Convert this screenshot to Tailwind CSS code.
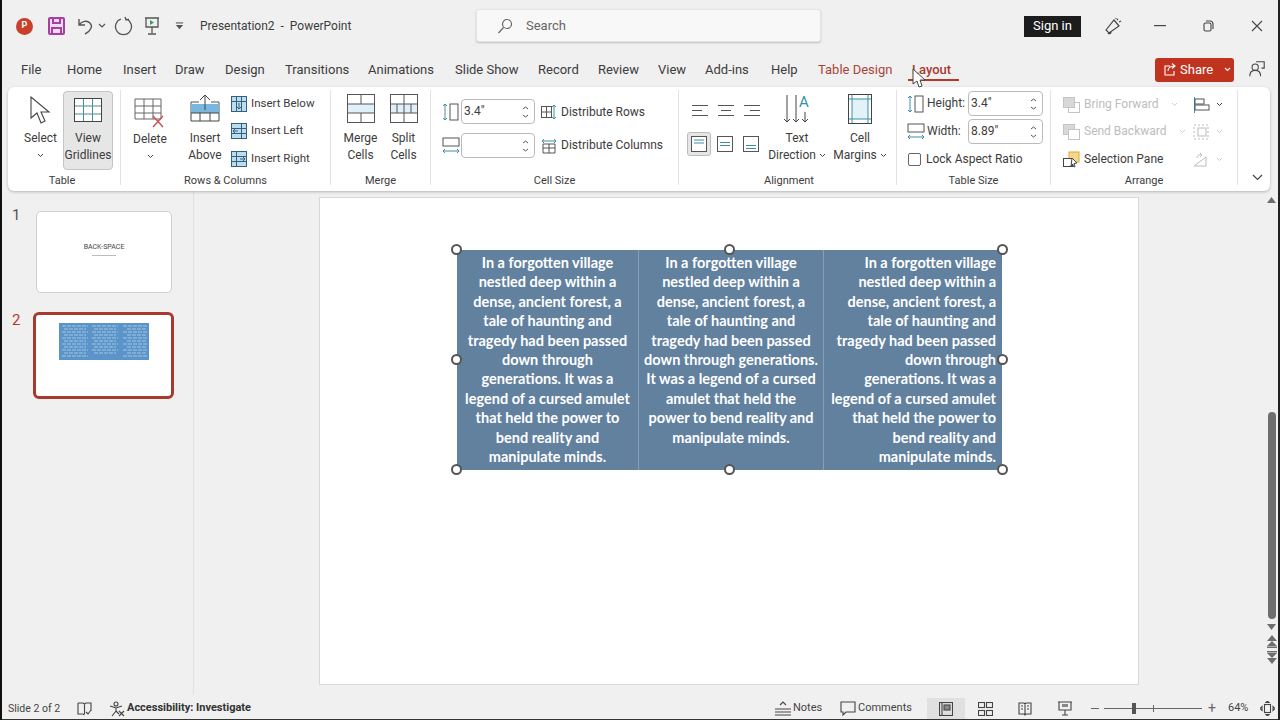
<!DOCTYPE html>
<html lang="en">
<head>
<meta charset="UTF-8">
<title>Presentation2 - PowerPoint</title>
<script src="https://cdn.jsdelivr.net/npm/@tailwindcss/browser@4"></script>
</head>
<body class="w-[1280px] h-[720px] overflow-hidden bg-[#f0f0f0] font-['Roboto',sans-serif] text-[#3c3c3c] flex flex-col border-l-2 border-r-2 border-l-[#111] border-r-[#222]">

<!-- title bar -->
<header class="h-[51px] flex items-center shrink-0 relative pt-[1px]">
  <div class="ml-[14px] w-[17px] h-[17px] rounded-full bg-[#c8402a] text-white text-[9px] font-bold flex items-center justify-center">P</div>
  <svg class="ml-[14px]" width="20" height="20" viewBox="0 0 20 20" fill="none" stroke="#a63ea6" stroke-width="2"><rect x="2" y="2" width="15" height="16" rx="1" fill="#eddcf0"/><path d="M6 2v5h7V2M5 18v-6h9v6"/></svg>
  <svg class="ml-[8px]" width="20" height="20" viewBox="0 0 20 20" fill="none" stroke="#555" stroke-width="1.400"><path d="M4 3v6h6M4 9c3-4 8-5 11-2s1 8-5 11"/></svg>
  <svg class="ml-[3px]" width="8" height="6" viewBox="0 0 8 6" fill="none" stroke="#555" stroke-width="1.200"><path d="M1 1l3 3 3-3"/></svg>
  <svg class="ml-[7px]" width="20" height="20" viewBox="0 0 20 20" fill="none" stroke="#555" stroke-width="1.300"><path d="M8 3a8 8 0 1 0 5 0M12 1l1 3 3-1"/></svg>
  <svg class="ml-[10px]" width="18" height="20" viewBox="0 0 18 20" fill="none" stroke="#555" stroke-width="1.300"><path d="M2 2h14M3 2v9h12V2M9 11v6M5 18h8"/><path d="M7 4l4 2.500-4 2.500z" fill="#3c9a5f" stroke="none"/></svg>
  <svg class="ml-[14px]" width="9" height="10" viewBox="0 0 10 10" fill="#555"><rect x="1" y="1" width="8" height="1.200"/><path d="M1 4h8L5 8.500z"/></svg>
  <span class="ml-[16px] text-[12px] whitespace-pre">Presentation2  -  PowerPoint</span>
  <div class="absolute left-[474px] top-[9px] w-[345px] h-[33px] bg-[#f8f8f8] border border-[#e4e4e4] rounded-[3px] shadow-[0_1px_2px_rgba(0,0,0,0.2)] flex items-center pl-[20px] text-[13px] text-[#666]">
    <svg width="16" height="16" viewBox="0 0 16 16" fill="none" stroke="#666" stroke-width="1.200"><circle cx="10" cy="6" r="4.500"/><path d="M6.500 9.500L1.500 15"/></svg>
    <span class="ml-[13px]">Search</span>
  </div>
  <div class="ml-auto flex items-center pr-[15px]">
    <div class="bg-[#1c1c1c] text-white text-[13px] w-[57px] h-[21px] flex items-center justify-center">Sign in</div>
    <svg class="ml-[23px]" width="18" height="18" viewBox="0 0 18 18" fill="none" stroke="#444" stroke-width="1.200"><path d="M2 13l8-10 5 6-10 7zM4 16c1 1 3 1 3-1M13 3l1-1M15 5l2-1M12 1v1"/></svg>
    <svg class="ml-[32px]" width="12" height="2" viewBox="0 0 12 2"><rect width="12" height="1.200" fill="#444"/></svg>
    <svg class="ml-[37px]" width="11" height="12" viewBox="0 0 11 12" fill="none" stroke="#444" stroke-width="1.100"><rect x="1" y="3" width="7" height="8" rx="1.500"/><path d="M3 1h4a3 3 0 0 1 3 3v5"/></svg>
    <svg class="ml-[37px]" width="12" height="12" viewBox="0 0 12 12" stroke="#444" stroke-width="1.100"><path d="M1 1l10 10M11 1L1 11"/></svg>
  </div>
</header>

<!-- tabs -->
<nav class="h-[36px] flex items-center shrink-0 text-[13px] relative pt-[1px]">
  <span class="ml-[19px] w-[46px]">File</span><span class="w-[56px]">Home</span><span class="w-[52px]">Insert</span><span class="w-[50px]">Draw</span><span class="w-[60px]">Design</span><span class="w-[83px]">Transitions</span><span class="w-[87px]">Animations</span><span class="w-[83px]">Slide Show</span><span class="w-[60px]">Record</span><span class="w-[60px]">Review</span><span class="w-[47px]">View</span><span class="w-[66px]">Add-ins</span><span class="w-[47px]">Help</span><span class="w-[94px] text-[#a8443a]">Table Design</span>
  <span class="relative text-[#a8392c] font-medium">Layout<span class="absolute left-[-4px] right-[-8px] top-[19px] h-[2px] bg-[#b5382a]"></span></span>
  <div class="ml-auto mr-[44px] flex items-center w-[79px] h-[24px] bg-[#c0331f] text-white rounded-[3px] text-[13px]">
    <svg class="ml-[8px]" width="13" height="13" viewBox="0 0 13 13" fill="none" stroke="#fff" stroke-width="1.100"><path d="M7 3H2v9h9V8M5 8c0-3 2-5 7-5M9 0.500L12 3 9 5.500"/></svg>
    <span class="ml-[4px]">Share</span>
    <svg class="ml-[11px]" width="7" height="5" viewBox="0 0 7 5" fill="none" stroke="#fff" stroke-width="1.100"><path d="M1 1l2.500 2.500L6 1"/></svg>
  </div>
  <svg class="absolute left-[1246px] top-[8px]" width="18" height="20" viewBox="0 0 20 20" fill="none" stroke="#444" stroke-width="1.200"><circle cx="8" cy="8" r="3.500"/><path d="M2 18c0-5 3-6.500 6-6.500s6 1.500 6 6.500M9 2h9v7h-3"/></svg>
</nav>

<!-- ribbon -->
<section class="relative shrink-0 ml-[6px] w-[1262px] h-[104px] bg-white rounded-[6px] shadow-[0_1px_3px_rgba(0,0,0,0.25)] flex text-[12px] leading-[17px] z-10">

  <!-- Table -->
  <div class="w-[113px] shrink-0 flex flex-col border-r border-[#e2e2e2] mt-[3px] mb-[6px]">
    <div class="flex-1 min-h-0 flex pl-[12px]">
      <div class="w-[41px] flex flex-col items-center pt-[6px]">
        <svg width="24" height="30" viewBox="0 0 24 30" fill="#fff" stroke="#444" stroke-width="1.100"><path d="M2 1v21l6-5 4 10 4-2-4-9h8z"/></svg>
        <span class="mt-[4px]">Select</span>
        <svg class="mt-[6px]" width="7" height="5" viewBox="0 0 7 5" fill="none" stroke="#444"><path d="M1 1l2.500 2.500L6 1"/></svg>
      </div>
      <div class="ml-[2px] mt-[1px] w-[50px] h-[79px] bg-[#e6e6e6] border border-[#c4c4c4] rounded-[4px] flex flex-col items-center pt-[6px]">
        <svg width="28" height="24" viewBox="0 0 28 24" fill="#fff" stroke="#4a8a9a" stroke-width="1"><rect x="0.500" y="0.500" width="27" height="23" stroke="#444"/><path d="M9.500 1v22M18.500 1v22M1 8h26M1 16h26" fill="none"/></svg>
        <span class="mt-[8px] text-center leading-[17px]">View<br>Gridlines</span>
      </div>
    </div>
    <div class="h-[13px] text-center text-[11px] leading-[18px] pr-[4px]">Table</div>
  </div>

  <!-- Rows & Columns -->
  <div class="w-[210px] shrink-0 flex flex-col border-r border-[#e2e2e2] mt-[3px] mb-[6px]">
    <div class="flex-1 min-h-0 flex">
      <div class="ml-[5px] w-[48px] flex flex-col items-center pt-[8px]">
        <svg width="32" height="31" viewBox="0 0 32 31" fill="none" stroke="#666" stroke-width="1"><path d="M1 1h26v20H1zM10 1v20M19 1v20M1 8h26M1 15h26"/><path d="M19 18l10 11M29 18L19 29" stroke="#c9505a" stroke-width="1.400"/></svg>
        <span class="mt-[2px]">Delete</span>
        <svg class="mt-[6px]" width="7" height="5" viewBox="0 0 7 5" fill="none" stroke="#444"><path d="M1 1l2.500 2.500L6 1"/></svg>
      </div>
      <div class="ml-[6px] w-[50px] flex flex-col items-center pt-[3px]">
        <svg width="30" height="30" viewBox="0 0 30 30" fill="none" stroke="#555" stroke-width="1"><path d="M1 20V9h8M21 9h8v11" /><rect x="1" y="11" width="28" height="9" fill="#7ab7e0" stroke="none"/><path d="M15 17V2M10 7l5-5 5 5" stroke="#444"/><path d="M1 20h28v8H1zM10 20v8M20 20v8" stroke="#444"/></svg>
        <span class="mt-[7px] text-center">Insert<br>Above</span>
      </div>
      <div class="ml-[1px] flex flex-col gap-[10px] pt-[5px] text-[11.500px]">
        <div class="flex items-center gap-[4px] h-[17px]"><svg width="16" height="16" viewBox="0 0 16 16" fill="#bcdcf2" stroke="#35607a"><rect x="0.500" y="0.500" width="15" height="15"/><path d="M5.500 1v14M10.500 1v14M1 5.500h14M8 7v6M6 11l2 2 2-2" fill="none"/></svg><span>Insert Below</span></div>
        <div class="flex items-center gap-[4px] h-[17px]"><svg width="16" height="16" viewBox="0 0 16 16" fill="#bcdcf2" stroke="#35607a"><rect x="0.500" y="0.500" width="15" height="15"/><path d="M10.500 1v14M1 5.500h14M1 10.500h14M7 8H2M4 6L2 8l2 2" fill="none"/></svg><span>Insert Left</span></div>
        <div class="flex items-center gap-[4px] h-[17px] mt-[1px]"><svg width="16" height="16" viewBox="0 0 16 16" fill="#bcdcf2" stroke="#35607a"><rect x="0.500" y="0.500" width="15" height="15"/><path d="M5.500 1v14M1 5.500h14M1 10.500h14M9 8h5M12 6l2 2-2 2" fill="none"/></svg><span>Insert Right</span></div>
      </div>
    </div>
    <div class="h-[13px] text-center text-[11px] leading-[18px]">Rows &amp; Columns</div>
  </div>

  <!-- Merge -->
  <div class="w-[100px] shrink-0 flex flex-col border-r border-[#e2e2e2] mt-[3px] mb-[6px]">
    <div class="flex-1 min-h-0 flex pl-[8px] pt-[4px]">
      <div class="w-[43px] flex flex-col items-center">
        <svg width="28" height="29" viewBox="0 0 28 29" fill="none" stroke="#555"><rect x="1" y="10" width="26" height="9" fill="#dff0fa" stroke="none"/><rect x="0.500" y="0.500" width="27" height="28"/><path d="M1 10h26M1 19h26M14 1v9M14 19v9"/></svg>
        <span class="mt-[7px] text-center">Merge<br>Cells</span>
      </div>
      <div class="w-[43px] flex flex-col items-center">
        <svg width="28" height="29" viewBox="0 0 28 29" fill="none" stroke="#555"><rect x="1" y="10" width="26" height="9" fill="#dff0fa" stroke="none"/><rect x="0.500" y="0.500" width="27" height="28"/><path d="M1 10h26M1 19h26M14 1v27M7 10v9M21 10v9"/></svg>
        <span class="mt-[7px] text-center">Split<br>Cells</span>
      </div>
    </div>
    <div class="h-[13px] text-center text-[11px] leading-[18px]">Merge</div>
  </div>

  <!-- Cell Size -->
  <div class="w-[248px] shrink-0 flex flex-col border-r border-[#e2e2e2] mt-[3px] mb-[6px]">
    <div class="flex-1 min-h-0 flex flex-col pl-[11px] pt-[9px] gap-[9px]">
      <div class="flex items-center h-[25px]">
        <svg width="18" height="18" viewBox="0 0 18 18" fill="none" stroke="#555"><path d="M3 1v16M1 3l2-2 2 2M1 15l2 2 2-2" stroke="#3a8fa8"/><rect x="8" y="1" width="8" height="16"/></svg>
        <div class="ml-[1px] w-[74px] h-[25px] border border-[#bbb] rounded-[4px] flex items-center pl-[2px]">3.4"<svg class="ml-auto mr-[5px]" width="7" height="14" viewBox="0 0 7 14" fill="none" stroke="#555"><path d="M1 4l2.500-2L6 4M1 10l2.500 2L6 10"/></svg></div>
        <svg class="ml-[6px]" width="16" height="16" viewBox="0 0 16 16" fill="none" stroke="#555"><rect x="0.500" y="2.500" width="10" height="11"/><path d="M5.500 3v10M1 8h9"/><path d="M13 1v14M11 3l2-2 2 2M11 13l2 2 2-2" stroke="#3a8fa8"/></svg>
        <span class="ml-[4px] pt-[2px]">Distribute Rows</span>
      </div>
      <div class="flex items-center h-[25px]">
        <svg width="18" height="18" viewBox="0 0 18 18" fill="none" stroke="#555"><rect x="1" y="1" width="16" height="8"/><path d="M1 14h16M3 12l-2 2 2 2M15 12l2 2-2 2" stroke="#3a8fa8"/></svg>
        <div class="ml-[1px] w-[74px] h-[25px] border border-[#bbb] rounded-[4px] flex items-center"><svg class="ml-auto mr-[5px]" width="7" height="14" viewBox="0 0 7 14" fill="none" stroke="#555"><path d="M1 4l2.500-2L6 4M1 10l2.500 2L6 10"/></svg></div>
        <svg class="ml-[6px]" width="16" height="16" viewBox="0 0 16 16" fill="none" stroke="#3a8fa8"><path d="M1 3h14M3 1l-2 2 2 2M13 1l2 2-2 2"/><path d="M2 6h12v9H2zM8 6v9M2 10h12" stroke="#555"/></svg>
        <span class="ml-[4px]">Distribute Columns</span>
      </div>
    </div>
    <div class="h-[13px] text-center text-[11px] leading-[18px]">Cell Size</div>
  </div>

  <!-- Alignment -->
  <div class="w-[218px] shrink-0 flex flex-col border-r border-[#e2e2e2] mt-[3px] mb-[6px]">
    <div class="flex-1 min-h-0 flex">
      <div class="pl-[8px] pt-[8px] w-[86px] shrink-0">
        <div class="flex items-center gap-[10px] h-[24px] pl-[5px]">
          <svg width="16" height="13" viewBox="0 0 16 13" stroke="#555"><path d="M0 1.500h16M0 6.500h10M0 11.500h16"/></svg>
          <svg width="16" height="13" viewBox="0 0 16 13" stroke="#555"><path d="M0 1.500h16M3 6.500h10M0 11.500h16"/></svg>
          <svg width="16" height="13" viewBox="0 0 16 13" stroke="#555"><path d="M0 1.500h16M6 6.500h10M0 11.500h16"/></svg>
        </div>
        <div class="flex items-center mt-[10px] h-[24px]">
          <div class="w-[24px] h-[24px] bg-[#e6e6e6] border border-[#bbb] rounded-[3px] flex items-center justify-center"><svg width="16" height="16" viewBox="0 0 16 16" fill="#fff" stroke="#555"><rect x="0.500" y="0.500" width="15" height="15"/><path d="M3 4h10M3 7h10" stroke="#3a8fa8"/></svg></div>
          <svg class="ml-[6px]" width="16" height="16" viewBox="0 0 16 16" fill="#fff" stroke="#555"><rect x="0.500" y="0.500" width="15" height="15"/><path d="M3 6.500h10M3 9.500h10" stroke="#3a8fa8"/></svg>
          <svg class="ml-[10px]" width="16" height="16" viewBox="0 0 16 16" fill="#fff" stroke="#555"><rect x="0.500" y="0.500" width="15" height="15"/><path d="M3 9.500h10M3 12.500h10" stroke="#3a8fa8"/></svg>
        </div>
      </div>
      <div class="w-[64px] flex flex-col items-center pt-[4px]">
        <svg width="28" height="30" viewBox="0 0 28 30" fill="none" stroke="#444"><path d="M4 1v27M1 25l3 3 3-3M13 1v27M10 25l3 3 3-3M22 18v10M19 25l3 3 3-3"/><text x="16" y="13" font-size="15" fill="#3a8fa8" stroke="none" font-family="Roboto">A</text></svg>
        <span class="mt-[6px] text-center whitespace-nowrap">Text<br>Direction <svg class="inline align-middle" width="7" height="5" viewBox="0 0 7 5" fill="none" stroke="#444"><path d="M1 1l2.500 2.500L6 1"/></svg></span>
      </div>
      <div class="w-[62px] flex flex-col items-center pt-[4px]">
        <svg width="24" height="30" viewBox="0 0 24 30" fill="none" stroke="#3a8fa8"><rect x="4" y="5" width="16" height="20" fill="#e3f1f8" stroke="none"/><rect x="0.500" y="0.500" width="23" height="29" stroke="#444"/><path d="M4 1v28M20 1v28M1 5h22M1 25h22"/></svg>
        <span class="mt-[6px] text-center whitespace-nowrap">Cell<br>Margins <svg class="inline align-middle" width="7" height="5" viewBox="0 0 7 5" fill="none" stroke="#444"><path d="M1 1l2.500 2.500L6 1"/></svg></span>
      </div>
    </div>
    <div class="h-[13px] text-[11px] leading-[18px] pl-[85px]">Alignment</div>
  </div>

  <!-- Table Size -->
  <div class="w-[154px] shrink-0 flex flex-col border-r border-[#e2e2e2] mt-[3px] mb-[6px]">
    <div class="flex-1 min-h-0 flex flex-col pl-[10px] pt-[1px]">
      <div class="flex items-center h-[25px]">
        <svg width="18" height="18" viewBox="0 0 18 18" fill="none" stroke="#555"><path d="M3 1v16M1 3l2-2 2 2M1 15l2 2 2-2" stroke="#3a8fa8"/><rect x="8" y="1" width="8" height="16"/></svg>
        <span class="ml-[2px] w-[41px]">Height:</span>
        <div class="w-[75px] h-[25px] border border-[#bbb] rounded-[4px] flex items-center pl-[2px]">3.4"<svg class="ml-auto mr-[5px]" width="7" height="14" viewBox="0 0 7 14" fill="none" stroke="#555"><path d="M1 4l2.500-2L6 4M1 10l2.500 2L6 10"/></svg></div>
      </div>
      <div class="flex items-center h-[25px] mt-[3px]">
        <svg width="18" height="18" viewBox="0 0 18 18" fill="none" stroke="#555"><rect x="1" y="1" width="16" height="8"/><path d="M1 14h16M3 12l-2 2 2 2M15 12l2 2-2 2" stroke="#3a8fa8"/></svg>
        <span class="ml-[2px] w-[41px]">Width:</span>
        <div class="w-[75px] h-[25px] border border-[#bbb] rounded-[4px] flex items-center pl-[2px]">8.89"<svg class="ml-auto mr-[5px]" width="7" height="14" viewBox="0 0 7 14" fill="none" stroke="#555"><path d="M1 4l2.500-2L6 4M1 10l2.500 2L6 10"/></svg></div>
      </div>
      <div class="flex items-center h-[17px] mt-[7px] pl-[1px]">
        <div class="w-[13px] h-[13px] border border-[#666] rounded-[2px]"></div>
        <span class="ml-[5px]">Lock Aspect Ratio</span>
      </div>
    </div>
    <div class="h-[13px] text-center text-[11px] leading-[18px]">Table Size</div>
  </div>

  <!-- Arrange -->
  <div class="w-[187px] shrink-0 flex flex-col border-r border-[#e2e2e2] mt-[3px] mb-[6px]">
    <div class="flex-1 min-h-0 flex pl-[12px] pt-[2px]">
      <div class="w-[130px] flex flex-col gap-[10px] pt-[4px]">
        <div class="flex items-center h-[17px] text-[#bdbdbd]"><svg width="17" height="16" viewBox="0 0 17 16" fill="#d8d8d8" stroke="#c4c4c4"><rect x="5.500" y="5.500" width="11" height="10" fill="#fff"/><rect x="0.500" y="0.500" width="11" height="10"/></svg><span class="ml-[4px]">Bring Forward</span><svg class="ml-[12px]" width="7" height="5" viewBox="0 0 7 5" fill="none" stroke="#ccc"><path d="M1 1l2.500 2.500L6 1"/></svg></div>
        <div class="flex items-center h-[17px] text-[#bdbdbd]"><svg width="17" height="16" viewBox="0 0 17 16" fill="#d8d8d8" stroke="#c4c4c4"><rect x="0.500" y="0.500" width="11" height="10"/><rect x="5.500" y="5.500" width="11" height="10" fill="#fff"/></svg><span class="ml-[4px]">Send Backward</span><svg class="ml-[12px]" width="7" height="5" viewBox="0 0 7 5" fill="none" stroke="#ccc"><path d="M1 1l2.500 2.500L6 1"/></svg></div>
        <div class="flex items-center h-[17px] mt-[1px]"><svg width="17" height="17" viewBox="0 0 17 17" fill="none" stroke="#444"><rect x="6" y="1" width="10" height="10" fill="#f6d88a" stroke="#d8a83a"/><rect x="0.500" y="7.500" width="9" height="8" fill="#fff"/><path d="M9 7l5 5-3 .5 1 3-1 .5-1.500-3-1.500 2z" fill="#fff"/></svg><span class="ml-[4px]">Selection Pane</span></div>
      </div>
      <div class="flex flex-col gap-[10px] pt-[4px]">
        <div class="flex items-center h-[17px]"><svg width="18" height="16" viewBox="0 0 18 16" fill="none" stroke="#555"><path d="M1.500 0v16" stroke="#3a8fa8"/><rect x="2" y="2" width="9" height="5"/><rect x="2" y="8" width="14" height="5"/></svg><svg class="ml-[5px]" width="7" height="5" viewBox="0 0 7 5" fill="none" stroke="#444"><path d="M1 1l2.500 2.500L6 1"/></svg></div>
        <div class="flex items-center h-[17px]"><svg width="18" height="16" viewBox="0 0 18 16" fill="none" stroke="#bbb"><rect x="1" y="1" width="14" height="14" stroke-dasharray="2 2"/><rect x="5" y="4" width="8" height="8"/></svg><svg class="ml-[5px]" width="7" height="5" viewBox="0 0 7 5" fill="none" stroke="#ccc"><path d="M1 1l2.500 2.500L6 1"/></svg></div>
        <div class="flex items-center h-[17px] mt-[1px]"><svg width="18" height="16" viewBox="0 0 18 16" fill="none" stroke="#bbb"><path d="M1 14L13 5v9zM4 6c0-3 3-4 5-3M7 1l2 2-2 2"/></svg><svg class="ml-[5px]" width="7" height="5" viewBox="0 0 7 5" fill="none" stroke="#ccc"><path d="M1 1l2.500 2.500L6 1"/></svg></div>
      </div>
    </div>
    <div class="h-[13px] text-center text-[11px] leading-[18px]">Arrange</div>
  </div>

  <div class="flex-1 flex items-end justify-center pb-[10px] pl-[6px]">
    <svg width="11" height="7" viewBox="0 0 11 7" fill="none" stroke="#444" stroke-width="1.200"><path d="M1 1l4.500 4.500L10 1"/></svg>
  </div>

  <!-- mouse cursor over the Layout tab -->
  <svg class="absolute left-[904px] top-[-19px]" width="14" height="21" viewBox="0 0 14 21" fill="#fff" stroke="#444"><path d="M1 1v15l4-3 2 6 3-1-2-6h5z"/></svg>
</section>

<!-- workspace -->
<main class="flex-1 flex min-h-0 relative">
  <!-- thumbnails -->
  <aside class="w-[192px] shrink-0 border-r border-[#e0e0e0] relative pt-[20px]">
    <div class="flex">
      <span class="ml-[10px] w-[24px] -mt-[5px] text-[15px] leading-[18px] text-[#555]">1</span>
      <div class="w-[136px] h-[82px] bg-white border border-[#d0d0d0] rounded-[5px] flex flex-col items-center pt-[31px]">
        <span class="text-[7px] leading-[9px] text-[#444]">BACK-SPACE</span>
        <span class="mt-[3px] w-[24px] h-[1px] bg-[#bbb]"></span>
      </div>
    </div>
    <div class="flex mt-[19px]">
      <span class="ml-[10px] w-[21px] -mt-[1px] text-[15px] leading-[18px] text-[#b5382a]">2</span>
      <div class="w-[141px] h-[87px] bg-white border-[3px] border-[#a8392e] rounded-[6px] pl-[23px] pt-[8px]">
        <svg width="90" height="37" viewBox="0 0 90 37"><rect width="90" height="37" fill="#5b94c8"/><path d="M3 3h26M5 6h22M3 9h26M5 12h22M3 15h26M5 18h22M3 21h26M5 24h22M3 27h26M5 30h22M3 33h26M33 3h26M35 6h22M33 9h26M35 12h22M33 15h26M35 18h22M33 21h26M35 24h22M33 27h26M35 30h22M64 3h24M68 6h20M64 9h24M68 12h20M64 15h24M68 18h20M64 21h24M68 24h20M64 27h24M68 30h20M64 33h24" stroke="#a6c6e4" stroke-width="1" stroke-dasharray="4 1"/></svg>
      </div>
    </div>
  </aside>

  <!-- slide area -->
  <div class="flex-1 pl-[125px] pt-[6px]">
    <div class="relative w-[820px] h-[488px] bg-white border border-[#d8d8d8] pl-[137px] pt-[52px]">
      <div class="relative w-[545px] h-[220px] bg-[#62819f] flex font-['Lato',sans-serif] font-bold text-[14.500px] leading-[19.400px] text-white">
        <div class="w-[182px] pt-[3px] text-center border-r border-[#86a0b8]">In a forgotten village<br>nestled deep within a<br>dense, ancient forest, a<br>tale of haunting and<br>tragedy had been passed<br>down through<br>generations. It was a<br>legend of a cursed amulet<br>that held the power to<br>bend reality and<br>manipulate minds.</div>
        <div class="w-[185px] pt-[3px] text-center border-r border-[#86a0b8]">In a forgotten village<br>nestled deep within a<br>dense, ancient forest, a<br>tale of haunting and<br>tragedy had been passed<br>down through generations.<br>It was a legend of a cursed<br>amulet that held the<br>power to bend reality and<br>manipulate minds.</div>
        <div class="flex-1 pt-[3px] pr-[6px] text-right">In a forgotten village<br>nestled deep within a<br>dense, ancient forest, a<br>tale of haunting and<br>tragedy had been passed<br>down through<br>generations. It was a<br>legend of a cursed amulet<br>that held the power to<br>bend reality and<br>manipulate minds.</div>
        <span class="absolute left-[-6px] top-[-6px] w-[11px] h-[11px] rounded-full bg-white border-2 border-[#555]"></span>
        <span class="absolute left-[267px] top-[-6px] w-[11px] h-[11px] rounded-full bg-white border-2 border-[#555]"></span>
        <span class="absolute right-[-6px] top-[-6px] w-[11px] h-[11px] rounded-full bg-white border-2 border-[#555]"></span>
        <span class="absolute left-[-6px] top-[104px] w-[11px] h-[11px] rounded-full bg-white border-2 border-[#555]"></span>
        <span class="absolute right-[-6px] top-[104px] w-[11px] h-[11px] rounded-full bg-white border-2 border-[#555]"></span>
        <span class="absolute left-[-6px] bottom-[-5px] w-[11px] h-[11px] rounded-full bg-white border-2 border-[#555]"></span>
        <span class="absolute left-[267px] bottom-[-5px] w-[11px] h-[11px] rounded-full bg-white border-2 border-[#555]"></span>
        <span class="absolute right-[-6px] bottom-[-5px] w-[11px] h-[11px] rounded-full bg-white border-2 border-[#555]"></span>
      </div>
    </div>
  </div>

  <!-- scrollbar -->
  <div class="w-[11px] mr-[1px] shrink-0 flex flex-col items-center pt-[6px]">
    <svg width="9" height="6" viewBox="0 0 9 6" fill="#6e6e6e"><path d="M0 6l4.500-6L9 6z"/></svg>
    <div class="mt-[209px] w-[8px] h-[207px] rounded-[4px] bg-[#6e6e6e]"></div>
    <svg class="mt-[5px]" width="9" height="6" viewBox="0 0 9 6" fill="#6e6e6e"><path d="M0 0l4.500 6L9 0z"/></svg>
    <svg class="mt-[5px]" width="10" height="13" viewBox="0 0 10 13" fill="#6e6e6e"><path d="M0 6l5-6 5 6zM0 11l5-5 5 5zM0 11.500h10V13H0z"/></svg>
    <svg class="mt-[3px]" width="10" height="13" viewBox="0 0 10 13" fill="#6e6e6e"><path d="M0 0h10v1.500H0zM0 2l5 5 5-5zM0 7l5 6 5-6z"/></svg>
  </div>
</main>

<!-- status bar -->
<footer class="h-[26px] shrink-0 flex items-center text-[11px] text-[#444] border-b border-[#333] pt-[4px]">
  <span class="ml-[6px] w-[69px] text-[10.500px]">Slide 2 of 2</span>
  <svg width="15" height="15" viewBox="0 0 15 15" fill="none" stroke="#444" stroke-width="1.100"><path d="M1 2h5l1.500 1L9 2h5v8M1 2v11h5l1.500 1M7.500 3v10M9 11l2 2 3-4"/></svg>
  <svg class="ml-[17px]" width="16" height="16" viewBox="0 0 16 16" fill="none" stroke="#444" stroke-width="1.100"><circle cx="7" cy="3" r="2"/><path d="M1 5l6 2 6-2M7 7v3l-4 5M7 10l3 3M10 10l5 5M15 10l-5 5"/></svg>
  <span class="ml-[2px] font-bold text-[#333]">Accessibility: Investigate</span>
  <div class="ml-auto flex items-center h-[21px]">
    <svg width="18" height="16" viewBox="0 0 18 16" fill="none" stroke="#444" stroke-width="1.100"><path d="M6 4l3-3 3 3M1 8h16M1 11h16M1 14h16"/></svg>
    <span class="ml-[1px] w-[47px]">Notes</span>
    <svg width="16" height="15" viewBox="0 0 16 15" fill="none" stroke="#444" stroke-width="1.100"><path d="M1 1h14v10H6l-3 3v-3H1z"/></svg>
    <span class="ml-[2px] w-[69px]">Comments</span>
    <div class="w-[38px] h-[21px] bg-[#e0e0e0] flex items-center justify-center"><svg width="14" height="14" viewBox="0 0 14 14" fill="none" stroke="#444" stroke-width="1.100"><rect x="0.500" y="0.500" width="13" height="13"/><path d="M3 1v12"/><rect x="5" y="3" width="6" height="5" fill="#888"/></svg></div>
    <div class="w-[40px] flex justify-center"><svg width="15" height="14" viewBox="0 0 15 14" fill="none" stroke="#444" stroke-width="1.100"><rect x="0.500" y="0.500" width="6" height="5"/><rect x="8.500" y="0.500" width="6" height="5"/><rect x="0.500" y="8.500" width="6" height="5"/><rect x="8.500" y="8.500" width="6" height="5"/></svg></div>
    <div class="w-[40px] flex justify-center"><svg width="14" height="14" viewBox="0 0 14 14" fill="none" stroke="#444" stroke-width="1.100"><path d="M1 1h5l1 1 1-1h5v11H8l-1 1-1-1H1zM7 2v11M3 4h2M3 7h2M9 4h2M9 7h2"/></svg></div>
    <div class="w-[40px] flex justify-center"><svg width="14" height="15" viewBox="0 0 14 15" fill="none" stroke="#444" stroke-width="1.100"><path d="M0 1h14M1 1v8h12V1M7 9v5M4 14h6"/><rect x="4" y="3" width="6" height="3" fill="#888" stroke="none"/></svg></div>
    <span class="ml-[6px] w-[8px] h-[1px] bg-[#666]"></span>
    <div class="ml-[5px] relative w-[98px] h-[1px] bg-[#666]">
      <span class="absolute left-[28px] top-[-5px] w-[4px] h-[11px] bg-[#555]"></span>
      <span class="absolute left-[49px] top-[-3px] w-[1px] h-[7px] bg-[#666]"></span>
    </div>
    <span class="ml-[6px] text-[14px] text-[#666] w-[19px]">+</span>
    <span class="w-[33px] pl-[1px]">64%</span>
    <svg class="mr-[3px]" width="15" height="15" viewBox="0 0 15 15" fill="none" stroke="#444" stroke-width="1.100"><rect x="4.500" y="3.500" width="6" height="8"/><path d="M7.500 0L6 1.500h3zM7.500 15L6 13.500h3zM0 7.500L2 5.500v4zM15 7.500L13 5.500v4z"/></svg>
  </div>
</footer>
</body>
</html>
